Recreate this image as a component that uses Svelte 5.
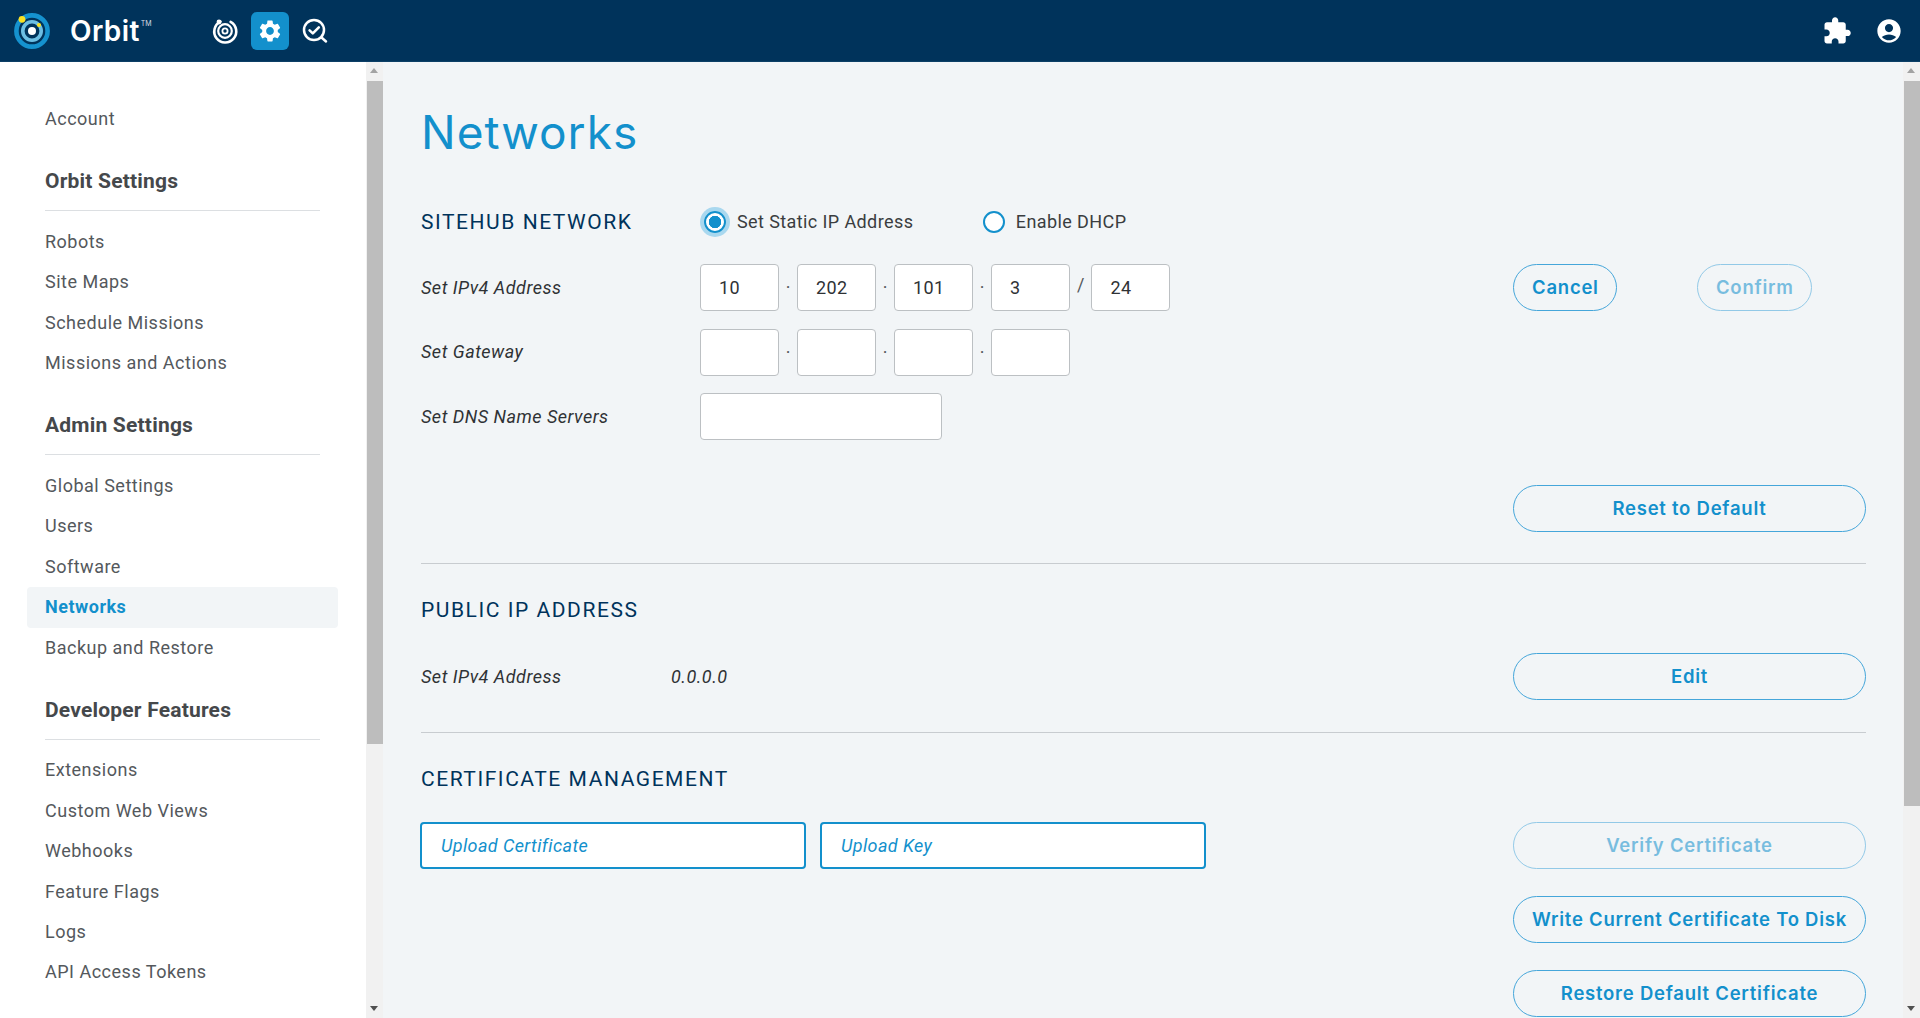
<script>
  const groups = [
    { title: 'Orbit Settings', items: ['Robots', 'Site Maps', 'Schedule Missions', 'Missions and Actions'] },
    { title: 'Admin Settings', items: ['Global Settings', 'Users', 'Software', 'Networks', 'Backup and Restore'] },
    { title: 'Developer Features', items: ['Extensions', 'Custom Web Views', 'Webhooks', 'Feature Flags', 'Logs', 'API Access Tokens'] }
  ];

  let mode = $state('static');
</script>

{#snippet scrollbar(thumb)}
  <div class="scrollbar">
    <span class="arrow up"></span>
    <div class="thumb" style="height: {thumb}px"></div>
    <span class="arrow down"></span>
  </div>
{/snippet}

<header class="topbar">
  <svg class="logo" viewBox="0 0 36 36" aria-hidden="true">
    <circle cx="18" cy="18" r="15.6" fill="none" stroke="#1592cf" stroke-width="4.6" />
    <circle cx="18" cy="18" r="9.2" fill="none" stroke="#6cbfe4" stroke-width="3.6" />
    <circle cx="18" cy="18" r="4" fill="#fff" />
    <circle cx="8" cy="6.3" r="3.4" fill="#fbe122" />
    <circle cx="25" cy="12" r="2.1" fill="#fbe122" />
  </svg>
  <div class="brand">Orbit<sup>TM</sup></div>

  <nav class="mainnav">
    <button class="navbtn" aria-label="Autonomy">
      <svg viewBox="0 0 28 28" width="28" height="28" fill="none" stroke="#fff">
        <path d="M9.5 4.6A11 11 0 1 0 19.6 4.9" stroke-width="2.6" stroke-linecap="round" />
        <circle cx="14" cy="14" r="6.8" stroke-width="2.2" />
        <circle cx="14" cy="14" r="2.6" stroke-width="1.8" />
        <circle cx="8" cy="5" r="2.4" fill="#fff" stroke="none" />
      </svg>
    </button>
    <button class="navbtn active" aria-label="Settings">
      <svg viewBox="0 0 24 24" width="26" height="26" fill="#fff">
        <path d="M19.14 12.94c.04-.3.06-.61.06-.94 0-.32-.02-.64-.07-.94l2.03-1.58a.49.49 0 0 0 .12-.61l-1.92-3.32a.488.488 0 0 0-.59-.22l-2.39.96c-.5-.38-1.03-.7-1.62-.94l-.36-2.54a.484.484 0 0 0-.48-.41h-3.84c-.24 0-.43.17-.47.41l-.36 2.54c-.59.24-1.13.57-1.62.94l-2.39-.96c-.22-.08-.47 0-.59.22L2.74 8.87c-.12.21-.08.47.12.61l2.03 1.58c-.05.3-.09.63-.09.94s.02.64.07.94l-2.03 1.58a.49.49 0 0 0-.12.61l1.92 3.32c.12.22.37.29.59.22l2.39-.96c.5.38 1.03.7 1.62.94l.36 2.54c.05.24.24.41.48.41h3.84c.24 0 .44-.17.47-.41l.36-2.54c.59-.24 1.13-.56 1.62-.94l2.39.96c.22.08.47 0 .59-.22l1.92-3.32c.12-.22.07-.47-.12-.61l-2.01-1.58zM12 15.6c-1.98 0-3.6-1.62-3.6-3.6s1.62-3.6 3.6-3.6 3.6 1.62 3.6 3.6-1.62 3.6-3.6 3.6z" />
      </svg>
    </button>
    <button class="navbtn" aria-label="Inspections">
      <svg viewBox="0 0 28 28" width="28" height="28" fill="none" stroke="#fff" stroke-linecap="round">
        <circle cx="13" cy="13" r="10" stroke-width="2.5" />
        <path d="M20.5 20.5l4.5 4" stroke-width="2.5" />
        <path d="M8.6 13.4l3.2 3 6-6" stroke-width="2.6" stroke-linejoin="round" />
      </svg>
    </button>
  </nav>

  <div class="topright">
    <svg viewBox="0 0 24 24" width="30" height="30" fill="#fff" aria-hidden="true">
      <path d="M20.5 11H19V7c0-1.1-.9-2-2-2h-4V3.5C13 2.12 11.88 1 10.5 1S8 2.12 8 3.5V5H4c-1.1 0-1.99.9-1.99 2v3.8H3.5c1.49 0 2.7 1.21 2.7 2.7s-1.21 2.7-2.7 2.7H2V20c0 1.1.9 2 2 2h3.8v-1.5c0-1.49 1.21-2.7 2.7-2.7 1.49 0 2.7 1.21 2.7 2.7V22H17c1.1 0 2-.9 2-2v-4h1.5c1.38 0 2.5-1.12 2.5-2.5S21.88 11 20.5 11z" />
    </svg>
    <svg viewBox="0 0 24 24" width="28" height="28" fill="#fff" aria-hidden="true">
      <path d="M12 2C6.48 2 2 6.48 2 12s4.48 10 10 10 10-4.48 10-10S17.52 2 12 2zm0 4c1.93 0 3.5 1.57 3.5 3.5S13.93 13 12 13s-3.5-1.57-3.5-3.5S10.07 6 12 6zm0 14c-2.03 0-4.43-.82-6.14-2.88C7.55 15.8 9.68 15 12 15s4.45.8 6.14 2.12C16.43 19.18 14.03 20 12 20z" />
    </svg>
  </div>
</header>

<div class="body">
  <aside class="sidebar">
    <a class="item" href="#account">Account</a>
    {#each groups as group}
      <h3>{group.title}</h3>
      {#each group.items as item}
        <a class="item" class:current={item === 'Networks'} href="#item">{item}</a>
      {/each}
    {/each}
  </aside>
  {@render scrollbar(663)}

  <main class="content">
    <h1>Networks</h1>

    <div class="head-row">
      <h2>SITEHUB NETWORK</h2>
      <label class="radio" class:on={mode === 'static'}>
        <input type="radio" bind:group={mode} value="static" />
        <span class="dot"></span>
        Set Static IP Address
      </label>
      <label class="radio second" class:on={mode === 'dhcp'}>
        <input type="radio" bind:group={mode} value="dhcp" />
        <span class="dot"></span>
        Enable DHCP
      </label>
    </div>

    <div class="row first">
      <span class="label">Set IPv4 Address</span>
      <input class="ip" value="10" /><span class="sep">·</span>
      <input class="ip" value="202" /><span class="sep">·</span>
      <input class="ip" value="101" /><span class="sep">·</span>
      <input class="ip" value="3" /><span class="slash">/</span>
      <input class="ip" value="24" />
      <div class="actions">
        <button class="pill cancel">Cancel</button>
        <button class="pill confirm" disabled>Confirm</button>
      </div>
    </div>
    <div class="row">
      <span class="label">Set Gateway</span>
      <input class="ip" /><span class="sep">·</span>
      <input class="ip" /><span class="sep">·</span>
      <input class="ip" /><span class="sep">·</span>
      <input class="ip" />
    </div>
    <div class="row">
      <span class="label">Set DNS Name Servers</span>
      <input class="dns" />
    </div>

    <button class="pill wide reset">Reset to Default</button>
    <hr class="rule-one" />

    <h2 class="section">PUBLIC IP ADDRESS</h2>
    <div class="row public">
      <span class="label short">Set IPv4 Address</span>
      <span class="value">0.0.0.0</span>
      <button class="pill wide push">Edit</button>
    </div>
    <hr class="rule-two" />

    <h2 class="section">CERTIFICATE MANAGEMENT</h2>
    <div class="cert">
      <div class="uploads">
        <button class="upload">Upload Certificate</button>
        <button class="upload">Upload Key</button>
      </div>
      <div class="cert-actions">
        <button class="pill wide" disabled>Verify Certificate</button>
        <button class="pill wide">Write Current Certificate To Disk</button>
        <button class="pill wide">Restore Default Certificate</button>
      </div>
    </div>
  </main>
  {@render scrollbar(725)}
</div>

<style>
  :global(body) {
    margin: 0;
    height: 1018px;
    overflow: hidden;
    font-family: Roboto, "Liberation Sans", sans-serif;
    background: #f2f5f7;
  }

  .topbar {
    height: 62px;
    box-sizing: border-box;
    background: #00335b;
    border-bottom: 1px solid #0c3f66;
    display: flex;
    align-items: center;
    padding-left: 13.5px;
    padding-right: 17px;
  }

  .logo {
    width: 36px;
    height: 36px;
    flex: none;
  }

  .brand {
    margin-left: 20.5px;
    width: 136px;
    font-family: Inter, sans-serif;
    font-weight: 600;
    font-size: 28px;
    letter-spacing: 0.4px;
    color: #fff;
  }

  .brand sup {
    font-size: 7px;
    font-weight: 400;
    letter-spacing: 0;
    vertical-align: 15px;
    line-height: 0;
    margin-left: 1px;
    color: #d5dde4;
  }

  .mainnav {
    display: flex;
    align-items: center;
    gap: 7px;
  }

  .navbtn {
    width: 38px;
    height: 38px;
    padding: 0;
    border: 0;
    border-radius: 6px;
    background: none;
    display: flex;
    align-items: center;
    justify-content: center;
  }

  .navbtn.active {
    background: #1390cc;
  }

  .topright {
    margin-left: auto;
    display: flex;
    align-items: center;
    gap: 23px;
  }

  .body {
    display: flex;
    height: 956px;
    overflow: hidden;
  }

  .sidebar {
    width: 366px;
    flex: none;
    box-sizing: border-box;
    background: #fff;
    padding: 37px 28px 0 27px;
  }

  .sidebar h3 {
    margin: 21px 18px 10.5px 18px;
    height: 51px;
    box-sizing: border-box;
    padding-top: 9px;
    border-bottom: 1px solid #dcdfe2;
    font-size: 21px;
    line-height: 24px;
    font-weight: 700;
    letter-spacing: 0.2px;
    color: #45484b;
  }

  .item {
    display: block;
    height: 40.4px;
    line-height: 40.4px;
    padding-left: 18px;
    border-radius: 4px;
    font-size: 18px;
    letter-spacing: 0.5px;
    color: #54585c;
    text-decoration: none;
  }

  .item.current {
    background: #f2f5f7;
    color: #1390cc;
    font-weight: 700;
  }

  .scrollbar {
    width: 17px;
    flex: none;
    background: #f1f1f1;
    padding-top: 19px;
    box-sizing: border-box;
    position: relative;
  }

  .thumb {
    margin-left: 1px;
    background: #bdbdbd;
  }

  .arrow {
    position: absolute;
    left: 4px;
    width: 0;
    height: 0;
    border-left: 4.5px solid transparent;
    border-right: 4.5px solid transparent;
  }

  .arrow.up {
    top: 6px;
    border-bottom: 5px solid #a3a3a3;
  }

  .arrow.down {
    bottom: 7px;
    border-top: 5px solid #505050;
  }

  .content {
    flex: 1;
    min-width: 0;
    padding: 40px 37px 0 38px;
  }

  h1 {
    margin: 0;
    height: 60px;
    line-height: 60px;
    font-family: Inter, sans-serif;
    font-weight: 400;
    font-size: 46px;
    letter-spacing: 1px;
    color: #1390cc;
  }

  h2 {
    margin: 0;
    font-size: 21px;
    font-weight: 400;
    letter-spacing: 1.55px;
    color: #00335b;
  }

  .head-row {
    margin-top: 36px;
    height: 47px;
    display: flex;
    align-items: center;
  }

  .head-row h2 {
    width: 279px;
  }

  .radio {
    display: flex;
    align-items: center;
    font-size: 18px;
    letter-spacing: 0.4px;
    color: #3a3d40;
  }

  .radio input {
    display: none;
  }

  .radio.second {
    margin-left: 65.5px;
  }

  .dot {
    width: 22px;
    height: 22px;
    box-sizing: border-box;
    margin-right: 11px;
    margin-left: 4px;
    border: 2px solid #1390cc;
    border-radius: 50%;
    background: #fff;
  }

  .radio.on .dot {
    background: radial-gradient(circle, #1390cc 6px, #fff 6.5px);
    box-shadow: 0 0 0 4px #a9d8ef;
  }

  .row {
    display: flex;
    align-items: center;
    height: 47px;
    margin-top: 17.5px;
  }

  .row.first {
    margin-top: 19px;
  }

  .label {
    width: 279px;
    flex: none;
    padding-bottom: 1px;
    font-style: italic;
    font-size: 18px;
    letter-spacing: 0.5px;
    color: #2f3235;
  }

  .label.short {
    width: 250px;
  }

  .value {
    padding-bottom: 1px;
    font-style: italic;
    font-size: 18px;
    letter-spacing: 0.5px;
    color: #2f3235;
  }

  input.ip,
  input.dns {
    box-sizing: border-box;
    height: 47px;
    border: 1px solid #bcc0c3;
    border-radius: 4px;
    background: #fff;
    padding: 0 18px;
    font: 18px Roboto, sans-serif;
    letter-spacing: 0.4px;
    color: #2f3235;
  }

  input.ip {
    width: 79px;
  }

  input.dns {
    width: 242px;
  }

  .sep,
  .slash {
    text-align: center;
    color: #55585b;
    font-size: 18px;
  }

  .sep {
    width: 18px;
  }

  .slash {
    width: 21.4px;
    margin-top: -6px;
  }

  .actions {
    margin-left: 343px;
    display: flex;
    gap: 80px;
  }

  .pill {
    box-sizing: border-box;
    height: 47px;
    border: 1.5px solid #45a6da;
    border-radius: 24px;
    background: none;
    font-family: Inter, sans-serif;
    font-weight: 600;
    font-size: 18.5px;
    letter-spacing: 0.75px;
    color: #1390cc;
    padding: 0 0 1px;
  }

  .pill:disabled {
    opacity: 0.55;
  }

  .pill.cancel {
    width: 104px;
  }

  .pill.confirm {
    width: 115px;
  }

  .pill.wide {
    width: 353px;
    display: block;
  }

  .pill.reset {
    margin: 45px 0 0 auto;
  }

  .pill.push {
    margin-left: auto;
  }

  hr {
    border: 0;
    border-top: 1px solid #c8ccd0;
    margin: 0;
  }

  .rule-one {
    margin-top: 31px;
  }

  .rule-two {
    margin-top: 31.5px;
    margin-bottom: 1px;
  }

  .section {
    height: 47px;
    line-height: 47px;
    margin-top: 23px;
  }

  .row.public {
    margin-top: 19px;
  }

  .cert {
    margin-top: 19px;
    display: flex;
    justify-content: space-between;
  }

  .uploads {
    display: flex;
    gap: 14px;
    height: 47px;
    margin-left: -1px;
  }

  .upload {
    box-sizing: border-box;
    width: 386px;
    height: 47px;
    padding: 0 0 0 19px;
    border: 2px solid #1390cc;
    border-radius: 4px;
    background: #fff;
    text-align: left;
    font: italic 18px Roboto, sans-serif;
    letter-spacing: 0.4px;
    color: #1390cc;
  }

  .cert-actions {
    display: flex;
    flex-direction: column;
    gap: 27px;
  }
</style>
